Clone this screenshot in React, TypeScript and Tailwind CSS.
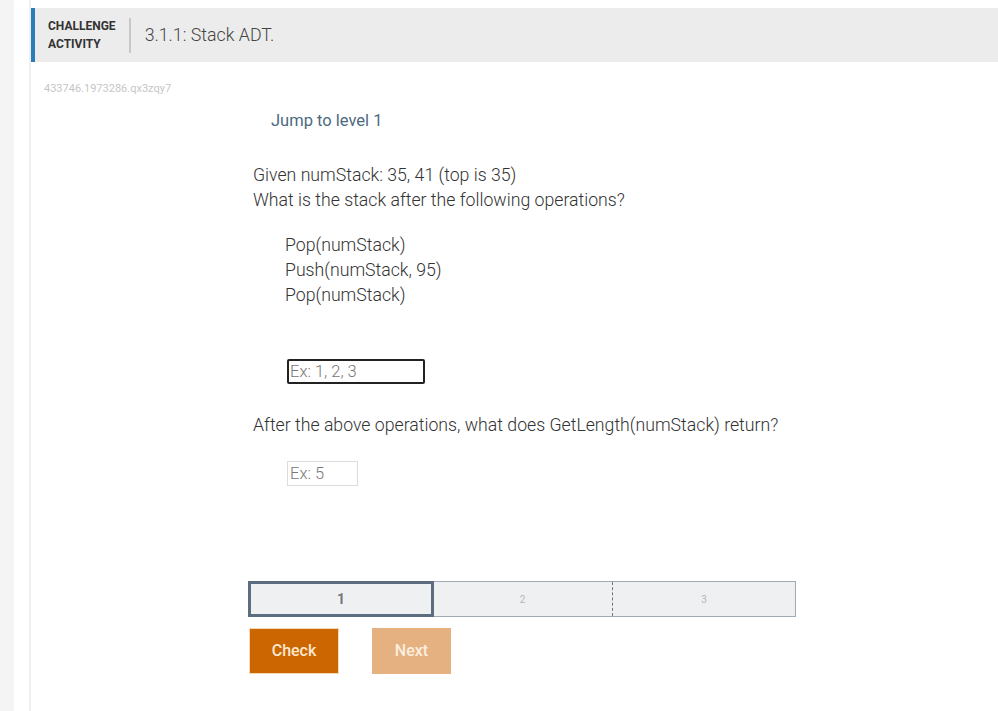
import React from 'react';

const ops = ['Pop(numStack)', 'Push(numStack, 95)', 'Pop(numStack)'];

export default function App() {
  return (
    <div className="flex w-[998px] h-[711px] bg-white overflow-hidden font-['Roboto',sans-serif] text-[#333]">
      <div className="w-[14px] bg-[#f4f4f4]" />
      <div className="w-[15px] bg-white" />
      <div className="flex-1 flex flex-col border-l-2 border-[#efefef] pt-[8px]">
        {/* header */}
        <div className="flex items-center h-[54px] bg-[#ececec] border-l-[4px] border-[#2a7db6]">
          <div className="pl-[13px] pr-[13px] text-[12px] font-bold leading-[18px] text-[#333]">
            <div>CHALLENGE</div>
            <div>ACTIVITY</div>
          </div>
          <div className="w-[2px] h-[35px] bg-[#c8c8c8]" />
          <div className="pl-[14px] text-[17.8px] font-light text-[#444]">3.1.1: Stack ADT.</div>
        </div>

        <div className="pl-[13px] pt-[20px] text-[11px] leading-[13px] text-[#c6c6c6]">433746.1973286.qx3zqy7</div>

        <div className="ml-[217px] flex flex-col">
          <div className="mt-[16px] ml-[23px] text-[16.5px] leading-[20px] text-[#4b6a80]">Jump to level 1</div>

          <div className="mt-[32px] ml-[5px] text-[17.7px] font-light leading-[25px]">
            <div>Given numStack: 35, 41 (top is 35)</div>
            <div>What is the stack after the following operations?</div>
          </div>

          <div className="mt-[20px] ml-[37px] text-[17.7px] font-light leading-[25px]">
            {ops.map((o, i) => (
              <div key={i}>{o}</div>
            ))}
          </div>

          <input
            className="mt-[51px] ml-[39px] w-[138px] h-[25px] border-2 border-[#222] rounded-[2px] px-[1px] text-[16.5px] font-light text-[#333] placeholder:text-[#777] outline-none"
            placeholder="Ex: 1, 2, 3"
          />

          <div className="mt-[29px] ml-[5px] text-[17.7px] font-light leading-[25px]">
            After the above operations, what does GetLength(numStack) return?
          </div>

          <input
            className="mt-[23px] ml-[39px] w-[71px] h-[25px] border border-[#dcdcdc] px-[2px] text-[16.5px] font-light text-[#333] placeholder:text-[#777] outline-none"
            placeholder="Ex: 5"
          />

          {/* level progress */}
          <div className="mt-[95px] flex w-[548px] h-[36px] border border-[#9fabb7] bg-[#eff0f2]">
            <div className="w-[186px] -m-px h-[36px] border-[3px] border-[#5c6d7f] flex items-center justify-center text-[14px] font-bold text-[#777]">
              1
            </div>
            <div className="w-[180px] flex items-center justify-center text-[10px] text-[#b4b4b4] border-r border-dashed border-[#6b7785]">
              2
            </div>
            <div className="flex-1 flex items-center justify-center text-[10px] text-[#b4b4b4]">3</div>
          </div>

          <div className="mt-[11px] flex gap-[33px] ml-[1px]">
            <button className="w-[90px] h-[46px] bg-[#cc6600] text-[16px] font-medium text-[#fde9cf] border border-[#f3d9b5]">
              Check
            </button>
            <button className="w-[79px] h-[46px] bg-[#e5b181] text-[16px] font-medium text-[#fbeede]">Next</button>
          </div>
        </div>
      </div>
    </div>
  );
}
